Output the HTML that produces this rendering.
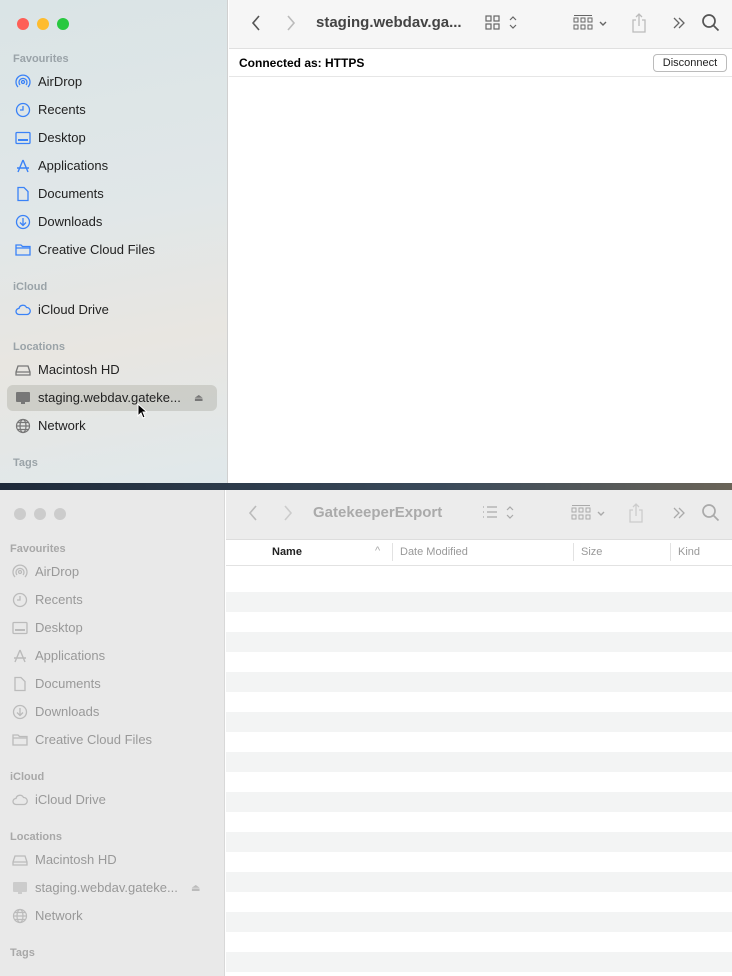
<!DOCTYPE html>
<html><head><meta charset="utf-8"><style>
*{margin:0;padding:0;box-sizing:border-box}
body{width:732px;height:976px;overflow:hidden;font-family:"Liberation Sans",sans-serif;position:relative;background:#2a3038}
.abs{position:absolute}
.sb{position:absolute;left:0;top:0;height:100%}
.sec{position:absolute;font-size:11px;font-weight:bold;color:#9aa3a8}
.it{position:absolute;font-size:13px;color:#222;height:22px;line-height:22px;display:flex;align-items:center}
.it svg{width:16px;height:16px;margin-right:7px;flex:none}
.dots span{display:inline-block;width:12px;height:12px;border-radius:50%;margin-right:8px}
</style></head><body>

<!-- top window -->
<div class="abs" style="left:0;top:0;width:732px;height:483px;background:#fff;overflow:hidden">
 <div class="sb" style="width:228px;background:linear-gradient(170deg,#dae4e6 0%,#e1e7e8 45%,#e8e6e1 70%,#e0e8eb 100%);border-right:1px solid #d0d0d0">
  <div class="abs dots" style="left:17px;top:17px"><span style="background:#fe5f57"></span><span style="background:#febc2e"></span><span style="background:#28c840"></span></div>
  <div class="sec" style="left:13px;top:53px">Favourites</div>
  <div class="it" style="left:15px;top:71px;color:#222"><svg viewBox="0 0 16 16" fill="none" stroke="#3a82f7" stroke-width="1.3"><circle cx="8" cy="8" r="1.5"/><path d="M5 11a4 4 0 1 1 6 0M3 13a7 7 0 1 1 10 0"/></svg>AirDrop</div>
  <div class="it" style="left:15px;top:99px"><svg viewBox="0 0 16 16" fill="none" stroke="#3a82f7" stroke-width="1.3"><circle cx="8" cy="8" r="6.5"/><path d="M8 4v4H5"/></svg>Recents</div>
  <div class="it" style="left:15px;top:127px"><svg viewBox="0 0 16 16" fill="none" stroke="#3a82f7" stroke-width="1.3"><rect x="1" y="2.5" width="14" height="11" rx="1"/><path d="M3 10h10" stroke-width="2"/></svg>Desktop</div>
  <div class="it" style="left:15px;top:155px"><svg viewBox="0 0 16 16" fill="none" stroke="#3a82f7" stroke-width="1.4"><path d="M8 2L3 14M8 2l5 12M2 10h12"/></svg>Applications</div>
  <div class="it" style="left:15px;top:183px"><svg viewBox="0 0 16 16" fill="none" stroke="#3a82f7" stroke-width="1.3"><path d="M3 1.5h6l4 4v9H3z"/></svg>Documents</div>
  <div class="it" style="left:15px;top:211px"><svg viewBox="0 0 16 16" fill="none" stroke="#3a82f7" stroke-width="1.3"><circle cx="8" cy="8" r="6.5"/><path d="M8 4v7M5 8.5l3 3 3-3"/></svg>Downloads</div>
  <div class="it" style="left:15px;top:239px"><svg viewBox="0 0 16 16" fill="none" stroke="#3a82f7" stroke-width="1.3"><path d="M1 3h5l1.5 1.5H15V13H1z M1 6h14"/></svg>Creative Cloud Files</div>
  <div class="sec" style="left:13px;top:281px">iCloud</div>
  <div class="it" style="left:15px;top:299px"><svg viewBox="0 0 16 16" fill="none" stroke="#3a82f7" stroke-width="1.3"><path d="M4 12.5a3 3 0 0 1 0-6 4 4 0 0 1 7.5-1 3.5 3.5 0 0 1 .5 7z"/></svg>iCloud Drive</div>
  <div class="sec" style="left:13px;top:341px">Locations</div>
  <div class="it" style="left:15px;top:359px"><svg viewBox="0 0 16 16" fill="none" stroke="#777" stroke-width="1.3"><path d="M3 4h10l2 6v3H1v-3z M1 10h14"/></svg>Macintosh HD</div>
  <div class="abs" style="left:7px;top:385px;width:210px;height:26px;background:rgba(160,160,150,.35);border-radius:6px"></div>
  <div class="it" style="left:15px;top:387px"><svg viewBox="0 0 16 16" fill="#777"><rect x="1" y="2" width="14" height="10" rx="1"/><rect x="6" y="12" width="4" height="2"/></svg>staging.webdav.gateke...</div>
  <div class="abs" style="left:194px;top:393px;font-size:10px;color:#777">⏏</div>
  <svg class="abs" style="left:137px;top:403px" width="10" height="16" viewBox="0 0 10 16"><path d="M1 1v12l3-3 2 5 2-1-2-5h4z" fill="#000" stroke="#fff" stroke-width="1"/></svg>
  <div class="it" style="left:15px;top:415px"><svg viewBox="0 0 16 16" fill="none" stroke="#777" stroke-width="1.2"><circle cx="8" cy="8" r="6.5"/><ellipse cx="8" cy="8" rx="3" ry="6.5"/><path d="M1.5 8h13M3 4.5h10M3 11.5h10"/></svg>Network</div>
  <div class="sec" style="left:13px;top:457px">Tags</div>
 </div>
 <div class="abs" style="left:229px;top:0;width:503px;height:49px;background:#f6f6f6;border-bottom:1px solid #e0e0e0"></div>
 <svg class="abs" style="left:250px;top:14px" width="12" height="18" viewBox="0 0 12 18" fill="none" stroke="#555" stroke-width="1.6"><path d="M9 2L3 9l6 7"/></svg>
 <svg class="abs" style="left:285px;top:14px" width="12" height="18" viewBox="0 0 12 18" fill="none" stroke="#bbb" stroke-width="1.6"><path d="M3 2l6 7-6 7"/></svg>
 <div class="abs" style="left:316px;top:14px;font-size:15px;font-weight:bold;color:#444">staging.webdav.ga...</div>
 <svg class="abs" style="left:485px;top:14px" width="36" height="18" viewBox="0 0 36 18" fill="none" stroke="#666" stroke-width="1.2"><rect x="1" y="2" width="5" height="5"/><rect x="9" y="2" width="5" height="5"/><rect x="1" y="10" width="5" height="5"/><rect x="9" y="10" width="5" height="5"/><path d="M25 6l3-3 3 3M25 11l3 3 3-3"/></svg>
 <svg class="abs" style="left:573px;top:14px" width="36" height="18" viewBox="0 0 36 18" fill="none" stroke="#666" stroke-width="1"><path d="M1 1.5h18"/><rect x="1" y="4" width="4" height="4"/><rect x="8" y="4" width="4" height="4"/><rect x="15" y="4" width="4" height="4"/><rect x="1" y="11" width="4" height="4"/><rect x="8" y="11" width="4" height="4"/><rect x="15" y="11" width="4" height="4"/><path d="M27 8l3 3 3-3" stroke-width="1.4"/></svg>
 <svg class="abs" style="left:630px;top:12px" width="18" height="22" viewBox="0 0 18 22" fill="none" stroke="#bbb" stroke-width="1.3"><path d="M6 8H3v12h12V8h-3M9 14V2M6 5l3-3 3 3"/></svg>
 <svg class="abs" style="left:672px;top:16px" width="14" height="14" viewBox="0 0 14 14" fill="none" stroke="#666" stroke-width="1.3"><path d="M2 2l5 5-5 5M7 2l5 5-5 5"/></svg>
 <svg class="abs" style="left:701px;top:13px" width="20" height="20" viewBox="0 0 20 20" fill="none" stroke="#555" stroke-width="1.7"><circle cx="8" cy="8" r="6"/><path d="M12.5 12.5l5 5"/></svg>
 <div class="abs" style="left:229px;top:50px;width:503px;height:27px;border-bottom:1px solid #e6e6e6"></div>
 <div class="abs" style="left:239px;top:56px;font-size:12px;font-weight:bold;color:#000">Connected as: HTTPS</div>
 <div class="abs" style="left:653px;top:54px;width:74px;height:18px;border:1px solid #bbb;border-radius:4px;font-size:11px;text-align:center;line-height:16px;color:#222;background:#fff">Disconnect</div>
</div>

<div class="abs" style="left:0;top:483px;width:732px;height:7px;background:linear-gradient(90deg,#1e2a3a,#3a4a5a 60%,#6a6458)"></div>

<!-- bottom window -->
<div class="abs" style="left:0;top:490px;width:732px;height:486px;background:#fff;overflow:hidden">
 <div class="sb" style="width:225px;background:#e9e9e9;border-right:1px solid #d8d8d8;color:#aaa">
  <div class="abs dots" style="left:14px;top:17px"><span style="background:#ccc"></span><span style="background:#ccc"></span><span style="background:#ccc"></span></div>
  <div class="sec" style="left:10px;top:53px;color:#a8a8a8">Favourites</div>
  <div class="it" style="left:12px;top:71px;color:#999"><svg viewBox="0 0 16 16" fill="none" stroke="#bbb" stroke-width="1.3"><circle cx="8" cy="8" r="1.5"/><path d="M5 11a4 4 0 1 1 6 0M3 13a7 7 0 1 1 10 0"/></svg>AirDrop</div>
  <div class="it" style="left:12px;top:99px;color:#999"><svg viewBox="0 0 16 16" fill="none" stroke="#bbb" stroke-width="1.3"><circle cx="8" cy="8" r="6.5"/><path d="M8 4v4H5"/></svg>Recents</div>
  <div class="it" style="left:12px;top:127px;color:#999"><svg viewBox="0 0 16 16" fill="none" stroke="#bbb" stroke-width="1.3"><rect x="1" y="2.5" width="14" height="11" rx="1"/><path d="M3 10h10" stroke-width="2"/></svg>Desktop</div>
  <div class="it" style="left:12px;top:155px;color:#999"><svg viewBox="0 0 16 16" fill="none" stroke="#bbb" stroke-width="1.4"><path d="M8 2L3 14M8 2l5 12M2 10h12"/></svg>Applications</div>
  <div class="it" style="left:12px;top:183px;color:#999"><svg viewBox="0 0 16 16" fill="none" stroke="#bbb" stroke-width="1.3"><path d="M3 1.5h6l4 4v9H3z"/></svg>Documents</div>
  <div class="it" style="left:12px;top:211px;color:#999"><svg viewBox="0 0 16 16" fill="none" stroke="#bbb" stroke-width="1.3"><circle cx="8" cy="8" r="6.5"/><path d="M8 4v7M5 8.5l3 3 3-3"/></svg>Downloads</div>
  <div class="it" style="left:12px;top:239px;color:#999"><svg viewBox="0 0 16 16" fill="none" stroke="#bbb" stroke-width="1.3"><path d="M1 3h5l1.5 1.5H15V13H1z M1 6h14"/></svg>Creative Cloud Files</div>
  <div class="sec" style="left:10px;top:281px;color:#a8a8a8">iCloud</div>
  <div class="it" style="left:12px;top:299px;color:#999"><svg viewBox="0 0 16 16" fill="none" stroke="#bbb" stroke-width="1.3"><path d="M4 12.5a3 3 0 0 1 0-6 4 4 0 0 1 7.5-1 3.5 3.5 0 0 1 .5 7z"/></svg>iCloud Drive</div>
  <div class="sec" style="left:10px;top:341px;color:#a8a8a8">Locations</div>
  <div class="it" style="left:12px;top:359px;color:#999"><svg viewBox="0 0 16 16" fill="none" stroke="#bbb" stroke-width="1.3"><path d="M3 4h10l2 6v3H1v-3z M1 10h14"/></svg>Macintosh HD</div>
  <div class="it" style="left:12px;top:387px;color:#999"><svg viewBox="0 0 16 16" fill="#ccc"><rect x="1" y="2" width="14" height="10" rx="1"/><rect x="6" y="12" width="4" height="2"/></svg>staging.webdav.gateke...</div>
  <div class="abs" style="left:191px;top:393px;font-size:10px;color:#bbb">⏏</div>
  <div class="it" style="left:12px;top:415px;color:#999"><svg viewBox="0 0 16 16" fill="none" stroke="#bbb" stroke-width="1.2"><circle cx="8" cy="8" r="6.5"/><ellipse cx="8" cy="8" rx="3" ry="6.5"/><path d="M1.5 8h13M3 4.5h10M3 11.5h10"/></svg>Network</div>
  <div class="sec" style="left:10px;top:457px;color:#a8a8a8">Tags</div>
 </div>
 <div class="abs" style="left:226px;top:0;width:506px;height:50px;background:#ececec;border-bottom:1px solid #ddd"></div>
 <svg class="abs" style="left:247px;top:14px" width="12" height="18" viewBox="0 0 12 18" fill="none" stroke="#bbb" stroke-width="1.6"><path d="M9 2L3 9l6 7"/></svg>
 <svg class="abs" style="left:282px;top:14px" width="12" height="18" viewBox="0 0 12 18" fill="none" stroke="#ccc" stroke-width="1.6"><path d="M3 2l6 7-6 7"/></svg>
 <div class="abs" style="left:313px;top:14px;font-size:15px;font-weight:bold;color:#aaa">GatekeeperExport</div>
 <svg class="abs" style="left:482px;top:14px" width="36" height="18" viewBox="0 0 36 18" fill="none" stroke="#aaa" stroke-width="1.2"><path d="M1 3h1M1 8h1M1 13h1M5 3h10M5 8h10M5 13h10M25 6l3-3 3 3M25 11l3 3 3-3"/></svg>
 <svg class="abs" style="left:571px;top:14px" width="36" height="18" viewBox="0 0 36 18" fill="none" stroke="#aaa" stroke-width="1"><path d="M1 1.5h18"/><rect x="1" y="4" width="4" height="4"/><rect x="8" y="4" width="4" height="4"/><rect x="15" y="4" width="4" height="4"/><rect x="1" y="11" width="4" height="4"/><rect x="8" y="11" width="4" height="4"/><rect x="15" y="11" width="4" height="4"/><path d="M27 8l3 3 3-3" stroke-width="1.4"/></svg>
 <svg class="abs" style="left:627px;top:12px" width="18" height="22" viewBox="0 0 18 22" fill="none" stroke="#ccc" stroke-width="1.3"><path d="M6 8H3v12h12V8h-3M9 14V2M6 5l3-3 3 3"/></svg>
 <svg class="abs" style="left:672px;top:16px" width="14" height="14" viewBox="0 0 14 14" fill="none" stroke="#aaa" stroke-width="1.3"><path d="M2 2l5 5-5 5M7 2l5 5-5 5"/></svg>
 <svg class="abs" style="left:701px;top:13px" width="20" height="20" viewBox="0 0 20 20" fill="none" stroke="#aaa" stroke-width="1.7"><circle cx="8" cy="8" r="6"/><path d="M12.5 12.5l5 5"/></svg>
 <div class="abs" style="left:226px;top:50px;width:506px;height:26px;border-bottom:1px solid #e2e2e2;font-size:11px;color:#999">
  <span class="abs" style="left:46px;top:6px;color:#222;font-weight:bold">Name</span>
  <span class="abs" style="left:149px;top:5px;color:#aaa">^</span>
  <span class="abs" style="left:166px;top:3px;width:1px;height:18px;background:#e2e2e2"></span>
  <span class="abs" style="left:174px;top:6px">Date Modified</span>
  <span class="abs" style="left:347px;top:3px;width:1px;height:18px;background:#e2e2e2"></span>
  <span class="abs" style="left:355px;top:6px">Size</span>
  <span class="abs" style="left:444px;top:3px;width:1px;height:18px;background:#e2e2e2"></span>
  <span class="abs" style="left:452px;top:6px">Kind</span>
 </div>
 <div class="abs" style="left:226px;top:82px;width:506px;height:404px;background:repeating-linear-gradient(180deg,#fff 0 20px,#f3f4f4 20px 40px)"></div>
</div>
</body></html>
